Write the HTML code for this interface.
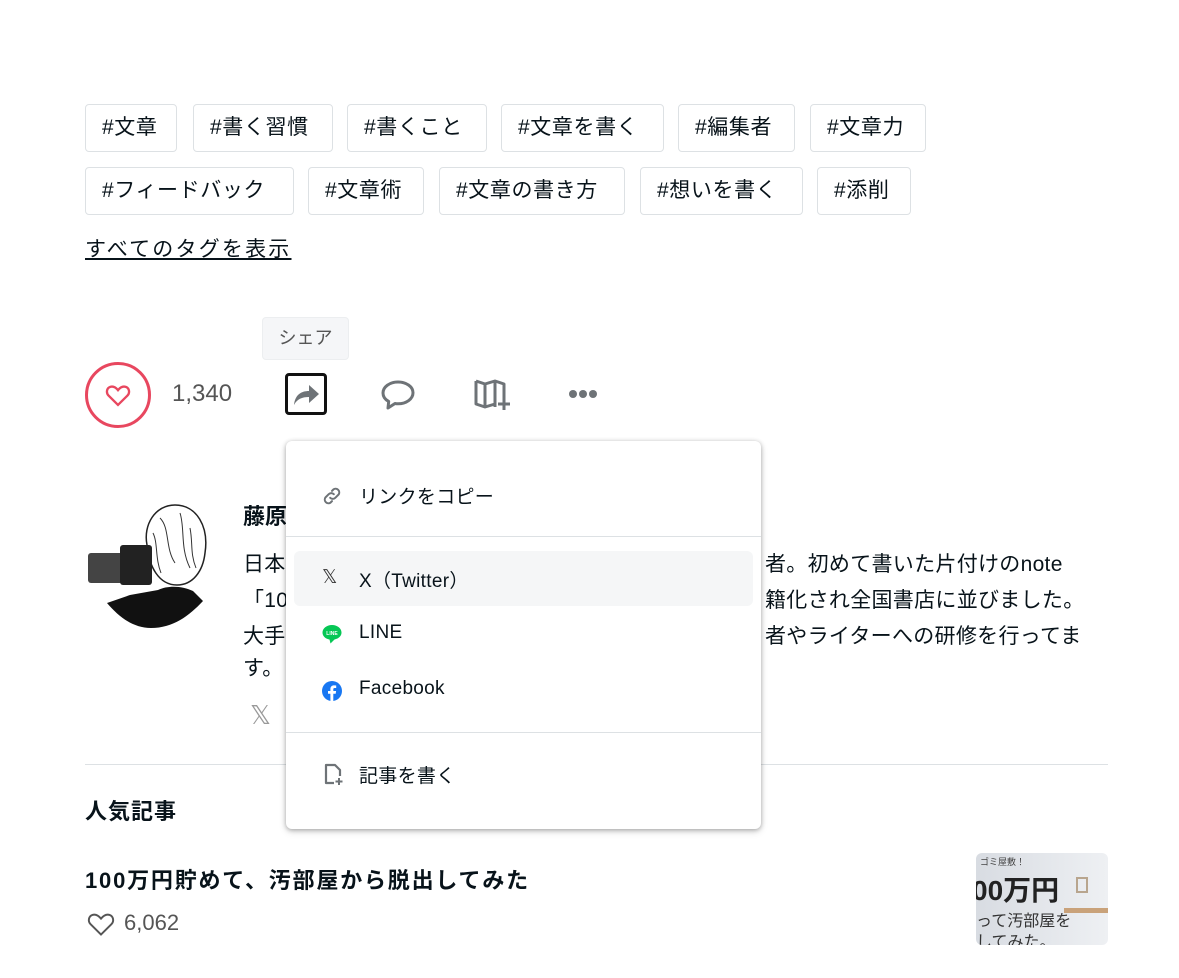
<!DOCTYPE html>
<html><head><meta charset="utf-8"><style>
*{margin:0;padding:0;box-sizing:border-box}
body{width:1179px;height:978px;overflow:hidden;background:#fff;font-family:"Liberation Sans","Noto Sans CJK JP",sans-serif;color:#08131a;position:relative}
.a{position:absolute;white-space:nowrap}
.tag{position:absolute;height:48px;border:1px solid #dde1e4;border-radius:4px;font-size:21px;letter-spacing:0.6px;line-height:46px;padding-left:16px;color:#08131a;white-space:nowrap}
.menu{position:absolute;left:286px;top:441px;width:475px;height:388px;background:#fff;border-radius:6px;box-shadow:0 1px 5px rgba(0,0,0,.3),0 3px 8px rgba(0,0,0,.12)}
.mi{position:absolute;left:73px;font-size:19px;letter-spacing:0.3px}
.ic{position:absolute;left:35px}
.hr{position:absolute;left:0;right:0;height:1px;background:#dde1e4}
.bio{font-size:21px;left:243px;letter-spacing:0.3px}
</style></head><body>
<div class="tag" style="left:85px;top:104px;width:92px">#文章</div>
<div class="tag" style="left:193px;top:104px;width:140px">#書く習慣</div>
<div class="tag" style="left:347px;top:104px;width:140px">#書くこと</div>
<div class="tag" style="left:501px;top:104px;width:163px">#文章を書く</div>
<div class="tag" style="left:678px;top:104px;width:117px">#編集者</div>
<div class="tag" style="left:810px;top:104px;width:116px">#文章力</div>
<div class="tag" style="left:85px;top:167px;width:209px">#フィードバック</div>
<div class="tag" style="left:308px;top:167px;width:116px">#文章術</div>
<div class="tag" style="left:439px;top:167px;width:186px">#文章の書き方</div>
<div class="tag" style="left:640px;top:167px;width:163px">#想いを書く</div>
<div class="tag" style="left:817px;top:167px;width:94px">#添削</div>
<div class="a" style="left:85px;top:235px;font-size:21px;letter-spacing:2.2px;text-decoration:underline;line-height:30px">すべてのタグを表示</div>

<div class="a" style="left:262px;top:317px;width:87px;height:43px;background:#f5f6f8;border:1px solid #eceef0;border-radius:4px;font-size:18px;line-height:41px;text-align:center;color:#555">シェア</div>
<div class="a" style="left:85px;top:362px;width:66px;height:66px;border:3px solid #e8475f;border-radius:50%"></div>
<svg class="a" style="left:103px;top:381px" width="30" height="28" viewBox="0 0 24 24"><path d="M12 20.5 4 12.6C1.6 10.2 2.2 6 5.4 5c2.5-.8 4.8.6 6.6 2.8C13.8 5.6 16.1 4.2 18.6 5c3.2 1 3.8 5.2 1.4 7.6z" fill="none" stroke="#e8475f" stroke-width="2"/></svg>
<div class="a" style="left:172px;top:380px;font-size:24px;color:#555">1,340</div>
<div class="a" style="left:285px;top:373px;width:42px;height:42px;border:3px solid #111;border-radius:4px"></div>
<svg class="a" style="left:290px;top:380px" width="32" height="28" viewBox="0 0 32 28"><path d="M4 25C5 15 11 11 19 11V5l10 9-10 9v-6C12 17 7 19 4 25z" fill="#6e7377"/></svg>
<svg class="a" style="left:380px;top:378px" width="36" height="34" viewBox="0 0 36 34"><path d="M18 4C9.5 4 3 9 3 15c0 3.6 2.2 6.6 5.7 8.5L8 30l7-4.5c1 .2 2 .3 3 .3 8.5 0 15-5 15-11S26.5 4 18 4z" fill="none" stroke="#6e7377" stroke-width="3" stroke-linejoin="round"/></svg>
<svg class="a" style="left:473px;top:376px" width="40" height="36" viewBox="0 0 40 36"><path d="M3 5l9 3 10-3 9 3v14M22 5v26M12 8v22M3 5v23l9 3 10-3" fill="none" stroke="#6e7377" stroke-width="3" stroke-linejoin="round"/><path d="M31 22v12M25 28h12" stroke="#6e7377" stroke-width="3"/></svg>
<div class="a" style="left:569px;top:390px;width:8px;height:8px;border-radius:50%;background:#6e7377;box-shadow:10px 0 #6e7377,20px 0 #6e7377"></div>

<svg class="a" style="left:85px;top:503px" width="128" height="125" viewBox="0 0 128 125"><path d="M22 100c12 14 26 25 44 25 22 0 38-12 52-27l-10-10c-10-5-25-6-35-1L45 92z" fill="#111"/><path d="M62 42c-4-20 8-40 28-40 22 0 34 22 30 48-2 18-12 32-28 32-18 0-28-18-30-40z" fill="#fff" stroke="#222" stroke-width="1.5"/><path d="M75 15c10 10 5 30 15 45M95 10c5 15 0 35 10 55M68 30c5 10 2 25 8 40M105 25c3 15 0 25 6 40" fill="none" stroke="#333" stroke-width="1"/><rect x="3" y="50" width="45" height="30" rx="3" fill="#444"/><rect x="35" y="42" width="32" height="40" rx="3" fill="#222"/></svg>
<div class="a" style="left:243px;top:499px;font-size:22px;font-weight:bold">藤原</div>
<div class="a bio" style="top:548px">日本</div>
<div class="a bio" style="left:765px;top:548px">者。初めて書いた片付けのnote</div>
<div class="a bio" style="top:584px">「10</div>
<div class="a bio" style="left:765px;top:584px">籍化され全国書店に並びました。</div>
<div class="a bio" style="top:620px">大手</div>
<div class="a bio" style="left:765px;top:620px">者やライターへの研修を行ってま</div>
<div class="a bio" style="top:652px">す。</div>
<div class="a" style="left:250px;top:700px;font-size:26px;color:#999">𝕏</div>
<div class="a" style="left:85px;top:764px;width:1023px;height:1px;background:#dde1e4"></div>
<div class="a" style="left:85px;top:794px;font-size:22px;letter-spacing:1px;font-weight:bold">人気記事</div>
<div class="a" style="left:85px;top:863px;font-size:22px;letter-spacing:1.8px;font-weight:bold">100万円貯めて、汚部屋から脱出してみた</div>
<svg class="a" style="left:86px;top:910px" width="30" height="27" viewBox="0 0 24 22"><path d="M12 20 3.5 11.6C1.2 9.3 1.8 5 5 4c2.5-.8 5 .6 7 3 2-2.4 4.5-3.8 7-3 3.2 1 3.8 5.3 1.5 7.6z" fill="none" stroke="#555" stroke-width="1.6"/></svg>
<div class="a" style="left:124px;top:910px;font-size:22px;color:#555">6,062</div>
<div class="a" style="left:976px;top:853px;width:132px;height:92px;border-radius:6px;overflow:hidden;background:linear-gradient(90deg,#d8dce2,#eef0f3)">
<div class="a" style="left:4px;top:2px;font-size:9px;color:#444">ゴミ屋敷！</div>
<div class="a" style="left:-4px;top:16px;font-size:28px;font-weight:bold;color:#222">00万円</div>
<div class="a" style="left:0;top:54px;font-size:16px;color:#333">って汚部屋を</div>
<div class="a" style="left:0;top:75px;font-size:16px;color:#333">してみた。</div>
<div class="a" style="left:100px;top:24px;width:12px;height:16px;border:2px solid #b8a58e"></div>
<div class="a" style="left:88px;top:55px;width:44px;height:5px;background:#c9a27a"></div>
</div>

<div class="menu">
<svg class="ic" style="top:44px" width="22" height="22" viewBox="0 0 24 24"><path d="M10 14a4 4 0 0 0 5.6 0l3.5-3.5a4 4 0 0 0-5.6-5.6L12 6.4M14 10a4 4 0 0 0-5.6 0l-3.5 3.5a4 4 0 0 0 5.6 5.6L12 17.6" fill="none" stroke="#6e7377" stroke-width="2.2" stroke-linecap="round"/></svg>
<div class="mi" style="top:41px">リンクをコピー</div>
<div class="hr" style="top:95px"></div>
<div class="a" style="left:8px;top:110px;width:459px;height:55px;background:#f5f6f7;border-radius:6px"></div>
<div class="a" style="left:36px;top:125px;font-size:19px;color:#333">𝕏</div>
<div class="mi" style="top:125px">X（Twitter）</div>
<svg class="ic" style="top:182px" width="22" height="22" viewBox="0 0 22 22"><path d="M11 2C5.5 2 1.5 5.5 1.5 9.5c0 3.5 3 6.4 7 7l1 4 4-4c4.5-1 7-3.7 7-7C20.5 5.5 16.5 2 11 2z" fill="#06c755"/><text x="11" y="12" font-size="5" font-family="Liberation Sans" fill="#fff" text-anchor="middle" font-weight="bold">LINE</text></svg>
<div class="mi" style="top:181px">LINE</div>
<svg class="ic" style="top:239px" width="22" height="22" viewBox="0 0 22 22"><circle cx="11" cy="11" r="10" fill="#1877f2"/><path d="M12.3 21v-7.2h2.4l.4-2.8h-2.8V9.3c0-.8.3-1.3 1.4-1.3h1.5V5.5c-.3 0-1.2-.1-2.2-.1-2.2 0-3.6 1.3-3.6 3.7V11H7v2.8h2.4V21z" fill="#fff"/></svg>
<div class="mi" style="top:237px">Facebook</div>
<div class="hr" style="top:291px"></div>
<svg class="ic" style="top:321px" width="24" height="24" viewBox="0 0 24 24"><path d="M13 21H5V3h9l5 5v6" fill="none" stroke="#6e7377" stroke-width="2.2" stroke-linejoin="round"/><path d="M18 16v7M14.5 19.5h7" stroke="#6e7377" stroke-width="2"/></svg>
<div class="mi" style="top:320px">記事を書く</div>
</div>
</body></html>
